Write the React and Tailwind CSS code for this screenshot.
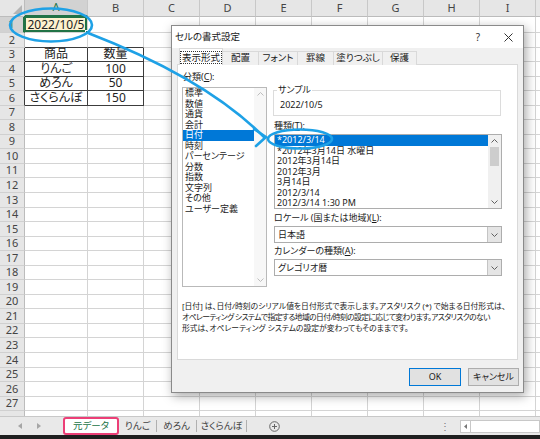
import React from 'react'

const COLS = ['A', 'B', 'C', 'D', 'E', 'F', 'G', 'H', 'I', 'J']
const ROWS = Array.from({ length: 28 }, (_, i) => i + 1)

const DATA = {
  3: ['商品', '数量'],
  4: ['りんご', '100'],
  5: ['めろん', '50'],
  6: ['さくらんぼ', '150'],
}

const CATEGORIES = ['標準', '数値', '通貨', '会計', '日付', '時刻', 'パーセンテージ', '分数', '指数', '文字列', 'その他', 'ユーザー定義']
const TYPES = ['*2012/3/14', '*2012年3月14日 水曜日', '2012年3月14日', '2012年3月', '3月14日', '2012/3/14', '2012/3/14 1:30 PM']
const TABS = [
  { label: '表示形式', w: 'w-[44px]' },
  { label: '配置', w: 'w-[36px]' },
  { label: 'フォント', w: 'w-[39px]' },
  { label: '罫線', w: 'w-[36px]' },
  { label: '塗りつぶし', w: 'w-[49px]' },
  { label: '保護', w: 'w-[34px]' },
]

function Chevron({ up, color = '#606060' }) {
  return (
    <svg width="7" height="4" viewBox="0 0 7 4">
      <polyline points={up ? '0.5,3.5 3.5,0.5 6.5,3.5' : '0.5,0.5 3.5,3.5 6.5,0.5'} fill="none" stroke={color} strokeWidth="1" />
    </svg>
  )
}

function Dropdown({ value }) {
  return (
    <div className="ml-[1px] w-[228px] h-[17px] border border-[#adadad] bg-white flex items-center">
      <span className="pl-[3px] text-[9px] flex-1">{value}</span>
      <div className="w-[14px] h-full bg-[#e5e5e5] border-l border-[#c4c4c4] flex items-center justify-center">
        <Chevron />
      </div>
    </div>
  )
}

function Label({ children, className = '' }) {
  return <div className={`h-[10px] leading-[10px] text-[9px] whitespace-nowrap ${className}`}>{children}</div>
}

function Sheet() {
  return (
    <div className="h-[416px] overflow-hidden flex flex-col">
      {/* header row */}
      <div className="flex shrink-0 h-[17px]">
        <div className="w-[25px] shrink-0 bg-[#e6e6e6] border-r border-b border-[#bcbcbc] relative">
          <svg className="absolute right-[2px] bottom-[2px]" width="9" height="9" viewBox="0 0 9 9">
            <polygon points="9,0 9,9 0,9" fill="#b5b5b5" />
          </svg>
        </div>
        {COLS.map(c => (
          <div
            key={c}
            className={`${c === 'A' ? 'w-[63px] bg-[#d2d2d2] text-[#217346] border-b-2 border-b-[#217346]' : 'w-[56px] bg-[#e6e6e6] text-[#444] border-b border-b-[#bcbcbc]'} shrink-0 border-r border-r-[#c8c8c8] flex items-center justify-center text-[11px]`}
          >
            {c === 'J' ? '' : c}
          </div>
        ))}
      </div>
      {ROWS.map(r => (
        <div key={r} className={`flex shrink-0 ${r === 1 ? 'h-[16px]' : 'h-[14.55px]'}`}>
          <div
            className={`w-[25px] shrink-0 flex items-center justify-center text-[11px] border-b border-b-[#d0d0d0] ${r === 1 ? 'bg-[#d2d2d2] text-[#217346] border-r-2 border-r-[#217346]' : r >= 3 && r <= 6 ? 'bg-[#e6e6e6] text-[#444] border-r border-r-[#3c3c3c]' : 'bg-[#e6e6e6] text-[#444] border-r border-r-[#bcbcbc]'}`}
          >
            {r < 28 ? r : ''}
          </div>
          {COLS.map((c, ci) => {
            const inTable = r >= 3 && r <= 6 && ci < 2
            const aboveTable = r === 2 && ci < 2
            const text = DATA[r] && ci < 2 ? DATA[r][ci] : null
            if (r === 1 && c === 'A') {
              return (
                <div key={c} className="w-[63px] shrink-0 relative bg-[#fdf2cf] border-r border-b border-[#d4d4d4] flex items-center justify-center text-[12px] text-[#222]">
                  2022/10/5
                  <div className="absolute -left-[1px] -top-[1px] right-0 bottom-0 border-2 border-[#217346]" />
                  <div className="absolute -right-[3px] -bottom-[3px] w-[5px] h-[5px] bg-[#217346] border border-white" />
                </div>
              )
            }
            return (
              <div
                key={c}
                className={`${c === 'A' ? 'w-[63px]' : 'w-[56px]'} shrink-0 bg-white border-r border-b ${inTable ? 'border-[#3c3c3c]' : aboveTable ? 'border-r-[#d4d4d4] border-b-[#3c3c3c]' : 'border-[#d4d4d4]'} flex items-center justify-center text-[12px] text-[#222]`}
              >
                {text}
              </div>
            )
          })}
        </div>
      ))}
    </div>
  )
}

function Dialog() {
  return (
    <div className="absolute left-[171px] top-[25px] w-[353px] h-[368px] bg-[#f0f0f0] border border-[#8a8a8a] shadow-[2px_3px_10px_rgba(0,0,0,0.35)] flex flex-col text-[#1a1a1a]">
      {/* title bar */}
      <div className="h-[22px] bg-white flex items-center shrink-0">
        <span className="pl-[3px] text-[9.5px]">セルの書式設定</span>
        <div className="ml-auto w-[30px] flex justify-center text-[10px] text-[#333]">?</div>
        <div className="w-[30px] flex justify-center">
          <svg width="9" height="9" viewBox="0 0 9 9">
            <path d="M0.5 0.5 L8.5 8.5 M8.5 0.5 L0.5 8.5" stroke="#333" strokeWidth="1" />
          </svg>
        </div>
      </div>

      {/* tabs */}
      <div className="flex items-end ml-[7px] mt-[1px] h-[16px] relative z-10 -mb-px">
        {TABS.map((t, i) =>
          i === 0 ? (
            <div key={t.label} className={`${t.w} h-[17px] bg-white border border-b-0 border-[#d9d9d9] flex items-center justify-center text-[9.5px]`}>
              <span className="border border-dotted border-[#333] px-[1px] leading-[11px]">{t.label}</span>
            </div>
          ) : (
            <div key={t.label} className={`${t.w} h-[14px] bg-[#f0f0f0] border border-l-0 border-b-0 border-[#d9d9d9] flex items-center justify-center text-[9.5px] whitespace-nowrap`}>
              {t.label}
            </div>
          )
        )}
      </div>

      {/* panel */}
      <div className="ml-[5px] w-[341px] h-[296px] shrink-0 bg-white border border-[#d9d9d9] flex flex-col">
        <div className="flex">
          {/* category column */}
          <div className="ml-[4px] w-[85px] flex flex-col">
            <Label className="mt-[7px] pl-[1px]">分類(<span className="underline">C</span>):</Label>
            <div className="mt-[5px] h-[200px] border border-[#b9b9b9] flex">
              <div className="flex-1 flex flex-col">
                {CATEGORIES.map(c => (
                  <div key={c} className={`h-[10.5px] leading-[10.5px] text-[9px] pl-[2px] whitespace-nowrap ${c === '日付' ? 'bg-[#0078d7] text-white' : ''}`}>
                    {c}
                  </div>
                ))}
              </div>
              <div className="w-[12px] bg-[#f7f7f7] flex flex-col items-center justify-between py-[4px]">
                <Chevron up color="#bdbdbd" />
                <Chevron color="#bdbdbd" />
              </div>
            </div>
          </div>

          {/* right column */}
          <div className="ml-[6px] w-[229px] flex flex-col">
            <div className="mt-[25px] h-[26px] w-[228px] border border-[#dcdcdc] relative">
              <span className="absolute -top-[6px] left-[3px] px-[1px] bg-white text-[9px] leading-[10px]">サンプル</span>
              <div className="pt-[9px] pl-[6px] text-[9px] leading-[10px]">2022/10/5</div>
            </div>
            <Label className="mt-[5px] pl-[1px]">種類(<span className="underline">T</span>):</Label>
            <div className="mt-[3px] ml-[1px] w-[228px] h-[75px] border border-[#adadad] flex">
              <div className="flex-1 flex flex-col">
                {TYPES.map((t, i) => (
                  <div key={t} className={`h-[10.5px] leading-[10.5px] text-[9px] pl-[2px] whitespace-nowrap ${i === 0 ? 'bg-[#0078d7] text-white' : ''}`}>
                    {t}
                  </div>
                ))}
              </div>
              <div className="w-[13px] bg-[#f0f0f0] flex flex-col items-center">
                <div className="h-[12px] flex items-center"><Chevron up /></div>
                <div className="w-[9px] h-[19px] bg-[#cdcdcd]" />
                <div className="flex-1" />
                <div className="h-[12px] flex items-center"><Chevron /></div>
              </div>
            </div>
            <Label className="mt-[4px] pl-[1px]">ロケール (国または地域)(<span className="underline">L</span>):</Label>
            <div className="mt-[3px]"><Dropdown value="日本語" /></div>
            <Label className="mt-[3px] pl-[1px]">カレンダーの種類(<span className="underline">A</span>):</Label>
            <div className="mt-[3px]"><Dropdown value="グレゴリオ暦" /></div>
          </div>
        </div>

        {/* description */}
        <div className="mt-[14px] pl-[4px] text-[7.8px] leading-[11px] whitespace-nowrap">
          <div>[日付] は、日付/時刻のシリアル値を日付形式で表示します。アスタリスク (*) で始まる日付形式は、</div>
          <div className="tracking-[-0.6px]">オペレーティング システムで指定する地域の日付/時刻の設定に応じて変わります。アスタリスクのない</div>
          <div>形式は、オペレーティング システムの設定が変わってもそのままです。</div>
        </div>
      </div>

      {/* buttons */}
      <div className="flex justify-end gap-[7px] pr-[4px] mt-[8px]">
        <button className="w-[52px] h-[18px] bg-[#e1e1e1] border border-[#0078d7] text-[9px] flex items-center justify-center">OK</button>
        <button className="w-[51px] h-[18px] bg-[#e1e1e1] border border-[#adadad] text-[9px] flex items-center justify-center">キャンセル</button>
      </div>
    </div>
  )
}

function SheetTabs() {
  return (
    <div className="h-[19px] bg-[#e9e9e9] border-t border-[#c8c8c8] flex items-center text-[9.5px] text-[#444] whitespace-nowrap">
      <div className="w-[63px] h-full flex items-center">
        <svg className="ml-[18px]" width="4" height="6" viewBox="0 0 4 6"><polygon points="4,0 4,6 0,3" fill="#a6a6a6" /></svg>
        <svg className="ml-[15px]" width="4" height="6" viewBox="0 0 4 6"><polygon points="0,0 0,6 4,3" fill="#a6a6a6" /></svg>
      </div>
      <div className="w-[56px] h-[18px] bg-white border-2 border-[#ec3f77] rounded-[3px] text-[#217346] flex items-center justify-center">
        元データ
      </div>
      <div className="w-[37px] flex justify-center">りんご</div>
      <div className="w-px h-[12px] bg-[#b0b0b0]" />
      <div className="w-[39px] flex justify-center">めろん</div>
      <div className="w-px h-[12px] bg-[#b0b0b0]" />
      <div className="w-[49px] flex justify-center">さくらんぼ</div>
      <div className="w-px h-[12px] bg-[#b0b0b0]" />
      <svg className="ml-[22px]" width="11" height="11" viewBox="0 0 11 11">
        <circle cx="5.5" cy="5.5" r="4.8" fill="none" stroke="#666" strokeWidth="1" />
        <path d="M5.5 3 V8 M3 5.5 H8" stroke="#666" strokeWidth="1" />
      </svg>
      <div className="ml-auto mr-[10px] text-[#777] text-[10px]">⋮</div>
      <div className="w-[80px] h-[13px] bg-white border border-[#c8c8c8] flex items-center">
        <svg className="ml-[3px]" width="3" height="5" viewBox="0 0 3 5"><polygon points="3,0 3,5 0,2.5" fill="#777" /></svg>
        <div className="ml-[3px] w-px h-full bg-[#c8c8c8]" />
      </div>
    </div>
  )
}

export default function App() {
  return (
    <div className="relative w-[540px] h-[439px] overflow-hidden bg-white font-['Noto_Sans','Noto_Sans_CJK_JP',sans-serif] [font-feature-settings:'palt']">
      <Sheet />
      <SheetTabs />
      <div className="h-[4px] bg-[#1f1f1f]" />
      <Dialog />
      <svg className="absolute left-0 top-0 pointer-events-none z-20" width="540" height="439">
        <g fill="none" stroke="#1ea1e6" strokeWidth="2.6" strokeLinecap="round" strokeLinejoin="round">
          <ellipse cx="51" cy="25" rx="41" ry="16.5" />
          <path d="M88 33 Q205 78 264 137" />
          <path d="M254 129 L266 137 L256 146" />
          <ellipse cx="300" cy="139" rx="32" ry="9.5" />
        </g>
      </svg>
    </div>
  )
}
